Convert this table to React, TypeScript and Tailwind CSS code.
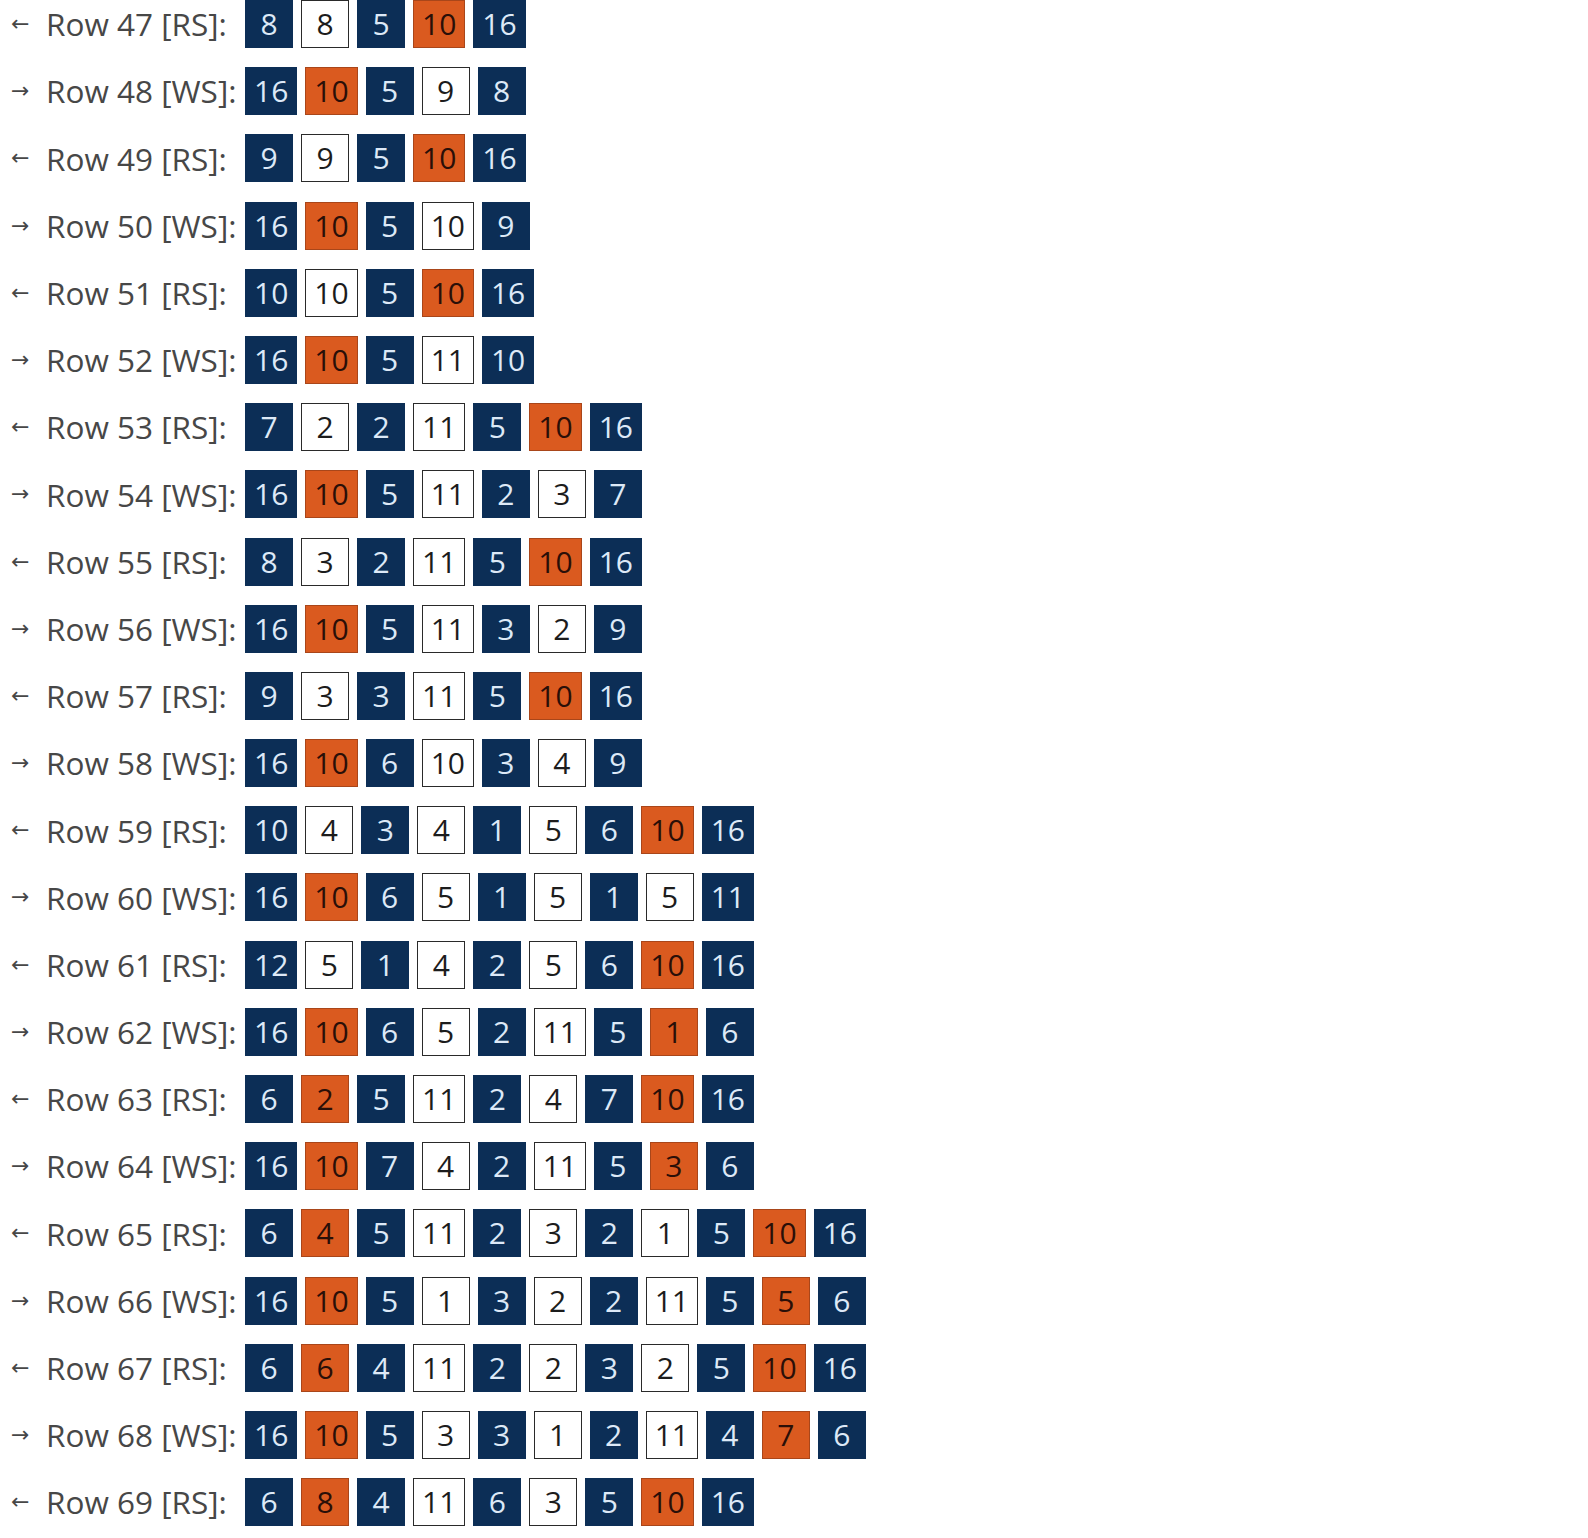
const rows: [number, "RS" | "WS", string][] = [
  [47, "RS", "8n 8w 5n 10o 16n"],
  [48, "WS", "16n 10o 5n 9w 8n"],
  [49, "RS", "9n 9w 5n 10o 16n"],
  [50, "WS", "16n 10o 5n 10w 9n"],
  [51, "RS", "10n 10w 5n 10o 16n"],
  [52, "WS", "16n 10o 5n 11w 10n"],
  [53, "RS", "7n 2w 2n 11w 5n 10o 16n"],
  [54, "WS", "16n 10o 5n 11w 2n 3w 7n"],
  [55, "RS", "8n 3w 2n 11w 5n 10o 16n"],
  [56, "WS", "16n 10o 5n 11w 3n 2w 9n"],
  [57, "RS", "9n 3w 3n 11w 5n 10o 16n"],
  [58, "WS", "16n 10o 6n 10w 3n 4w 9n"],
  [59, "RS", "10n 4w 3n 4w 1n 5w 6n 10o 16n"],
  [60, "WS", "16n 10o 6n 5w 1n 5w 1n 5w 11n"],
  [61, "RS", "12n 5w 1n 4w 2n 5w 6n 10o 16n"],
  [62, "WS", "16n 10o 6n 5w 2n 11w 5n 1o 6n"],
  [63, "RS", "6n 2o 5n 11w 2n 4w 7n 10o 16n"],
  [64, "WS", "16n 10o 7n 4w 2n 11w 5n 3o 6n"],
  [65, "RS", "6n 4o 5n 11w 2n 3w 2n 1w 5n 10o 16n"],
  [66, "WS", "16n 10o 5n 1w 3n 2w 2n 11w 5n 5o 6n"],
  [67, "RS", "6n 6o 4n 11w 2n 2w 3n 2w 5n 10o 16n"],
  [68, "WS", "16n 10o 5n 3w 3n 1w 2n 11w 4n 7o 6n"],
  [69, "RS", "6n 8o 4n 11w 6n 3w 5n 10o 16n"],
];

const boxStyle: Record<string, string> = {
  n: "bg-[#0c2e56] border-[#0c2e56] text-[#dde9f7]",
  w: "bg-white border-[#2a2a2a] text-[#1c1c1c]",
  o: "bg-[#da5a1f] border-[#a9461a] text-[#2a0f08]",
};

function Stitch({ cell }: { cell: string }) {
  const count = cell.slice(0, -1);
  const kind = cell.slice(-1);
  return (
    <div
      className={`h-12 min-w-[48px] px-[8px] flex items-center justify-center border-[1.5px] ${boxStyle[kind]}`}
    >
      {count}
    </div>
  );
}

export default function App() {
  return (
    <main className="min-h-screen bg-white font-['Open_Sans',sans-serif] text-[30px] leading-none">
      <div className="flex flex-col gap-[19.2px]">
        {rows.map(([num, side, cells]) => (
          <div key={num} className="flex items-center">
            <div className="w-[245px] shrink-0 pl-[11px] flex items-center text-[#474747]">
              <span className="w-[35px] text-[22px] font-['DejaVu_Sans',sans-serif]">
                {side === "RS" ? "←" : "→"}
              </span>
              <span className="text-[31.5px]">
                Row {num} [{side}]:
              </span>
            </div>
            <div className="flex gap-[8px]">
              {cells.split(" ").map((c, i) => (
                <Stitch key={i} cell={c} />
              ))}
            </div>
          </div>
        ))}
      </div>
    </main>
  );
}
